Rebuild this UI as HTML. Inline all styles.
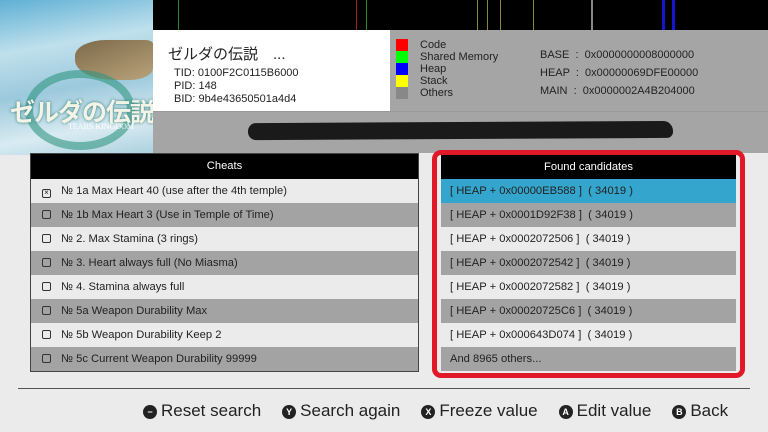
<!DOCTYPE html>
<html><head><meta charset="utf-8"><style>
*{margin:0;padding:0;box-sizing:border-box}
body{width:768px;height:432px;overflow:hidden;background:#ebebeb;font-family:"Liberation Sans","Noto Sans CJK JP",sans-serif;position:relative;color:#222}
.a{position:absolute}
.row{height:24px;line-height:24px;font-size:11.2px;white-space:nowrap}
.l{background:#ebebeb}.d{background:#a3a3a3}
.cb{display:inline-block;width:9px;height:9px;border:1.3px solid #333;border-radius:2px;margin:0 10px 0 11px;vertical-align:-1px;font-size:8px;line-height:6px;text-align:center}
.ft{font-size:17px;color:#222}
.ic{display:inline-block;width:14px;height:14px;border-radius:50%;background:#222;color:#fff;font-size:9px;line-height:14px;text-align:center;font-weight:bold;vertical-align:1px;margin-right:4px}
.g{display:inline-block;width:21px}
</style></head><body>
<div class="a" style="left:0;top:0;width:153px;height:155px;background:linear-gradient(170deg,#5fb0d4 0%,#bfe0ec 30%,#9cc9dc 55%,#d9ebf2 80%,#a9d0de 100%)"></div>
<div class="a" style="left:75px;top:40px;width:78px;height:40px;background:linear-gradient(160deg,#7d6a4a,#b8a27a);border-radius:40% 10% 30% 50%"></div>
<div class="a" style="left:25px;top:70px;width:110px;height:80px;border-radius:50%;border:8px solid rgba(50,150,130,.6)"></div>
<div class="a" style="left:10px;top:93px;font-size:25px;font-weight:bold;color:#f3f3e8;text-shadow:0 0 3px #2a7a70;letter-spacing:-1px">ゼルダの伝説</div>
<div class="a" style="left:68px;top:122px;font-size:8px;color:#fff;font-family:'Liberation Serif',serif">TEARS KINGDOM</div>
<div class="a" style="left:153px;top:0;width:615px;height:30px;background:#000"></div>
<div class="a" style="left:178px;top:0;width:1px;height:30px;background:#2a8a2a"></div>
<div class="a" style="left:356px;top:0;width:1px;height:30px;background:#a02020"></div>
<div class="a" style="left:366px;top:0;width:1px;height:30px;background:#2a8a2a"></div>
<div class="a" style="left:477px;top:0;width:1px;height:30px;background:#88883a"></div>
<div class="a" style="left:487px;top:0;width:1px;height:30px;background:#88883a"></div>
<div class="a" style="left:500px;top:0;width:1px;height:30px;background:#88883a"></div>
<div class="a" style="left:533px;top:0;width:1px;height:30px;background:#88883a"></div>
<div class="a" style="left:591px;top:0;width:2px;height:30px;background:#888"></div>
<div class="a" style="left:662px;top:0;width:3px;height:30px;background:#1515d0"></div>
<div class="a" style="left:672px;top:0;width:3px;height:30px;background:#1515d0"></div>
<div class="a" style="left:153px;top:30px;width:237px;height:81px;background:#fff"></div>
<div class="a" style="left:168px;top:43px;font-size:15px">ゼルダの伝説　...</div>
<div class="a" style="left:174px;top:67px;font-size:11px;line-height:13px">TID: 0100F2C0115B6000<br>PID: 148<br>BID: 9b4e43650501a4d4</div>
<div class="a" style="left:390px;top:30px;width:378px;height:82px;background:#a5a5a5"></div>
<div class="a" style="left:396px;top:39px;width:12px;height:12px;background:#f00"></div>
<div class="a" style="left:396px;top:51px;width:12px;height:12px;background:#0f0"></div>
<div class="a" style="left:396px;top:63px;width:12px;height:12px;background:#00f"></div>
<div class="a" style="left:396px;top:75px;width:12px;height:12px;background:#ff0"></div>
<div class="a" style="left:396px;top:87px;width:12px;height:12px;background:#888"></div>
<div class="a" style="left:420px;top:39px;font-size:11px;line-height:12px;color:#222">Code<br>Shared Memory<br>Heap<br>Stack<br>Others</div>
<div class="a" style="left:540px;top:46px;font-size:11px;line-height:18px;color:#222;white-space:pre">BASE  :  0x0000000008000000
HEAP  :  0x00000069DFE00000
MAIN  :  0x0000002A4B204000</div>
<div class="a" style="left:153px;top:111px;width:615px;height:42px;background:#a5a5a5;border-top:1px solid #999"></div>
<div class="a" style="left:248px;top:122px;width:425px;height:17px;background:#1a1a1a;border-radius:8px 10px 6px 8px;transform:rotate(-.3deg)"></div>
<div class="a" style="left:30px;top:153px;width:389px;height:219px;border:1px solid #444;background:#ebebeb"></div>
<div class="a" style="left:31px;top:154px;width:387px">
<div class="row" style="background:#000;color:#fff;text-align:center;height:25px;line-height:24px">Cheats</div>
<div class="row l"><span class="cb">×</span>№ 1a Max Heart 40 (use after the 4th temple)</div>
<div class="row d"><span class="cb"></span>№ 1b Max Heart 3 (Use in Temple of Time)</div>
<div class="row l"><span class="cb"></span>№ 2. Max Stamina (3 rings)</div>
<div class="row d"><span class="cb"></span>№ 3. Heart always full (No Miasma)</div>
<div class="row l"><span class="cb"></span>№ 4. Stamina always full</div>
<div class="row d"><span class="cb"></span>№ 5a Weapon Durability Max</div>
<div class="row l"><span class="cb"></span>№ 5b Weapon Durability Keep 2</div>
<div class="row d"><span class="cb"></span>№ 5c Current Weapon Durability 99999</div>
</div>
<div class="a" style="left:441px;top:155px;width:295px">
<div class="row" style="background:#000;color:#fff;text-align:center">Found candidates</div>
<div class="row" style="background:#34a5cc;padding-left:9px">[ HEAP + 0x00000EB588 ]&nbsp; ( 34019 )</div>
<div class="row d" style="padding-left:9px">[ HEAP + 0x0001D92F38 ]&nbsp; ( 34019 )</div>
<div class="row l" style="padding-left:9px">[ HEAP + 0x0002072506 ]&nbsp; ( 34019 )</div>
<div class="row d" style="padding-left:9px">[ HEAP + 0x0002072542 ]&nbsp; ( 34019 )</div>
<div class="row l" style="padding-left:9px">[ HEAP + 0x0002072582 ]&nbsp; ( 34019 )</div>
<div class="row d" style="padding-left:9px">[ HEAP + 0x00020725C6 ]&nbsp; ( 34019 )</div>
<div class="row l" style="padding-left:9px">[ HEAP + 0x000643D074 ]&nbsp; ( 34019 )</div>
<div class="row d" style="padding-left:9px">And 8965 others...</div>
</div>
<div class="a" style="left:432px;top:150px;width:313px;height:228px;border:5px solid #e01828;border-radius:9px"></div>
<div class="a" style="left:18px;top:388px;width:732px;height:1px;background:#555"></div>
<div class="a ft" style="left:143px;top:401px;white-space:nowrap">
<span class="ic">−</span>Reset search<span class="g"></span><span class="ic">Y</span>Search again<span class="g"></span><span class="ic">X</span>Freeze value<span class="g"></span><span class="ic">A</span>Edit value<span class="g"></span><span class="ic">B</span>Back</div>
</body></html>
